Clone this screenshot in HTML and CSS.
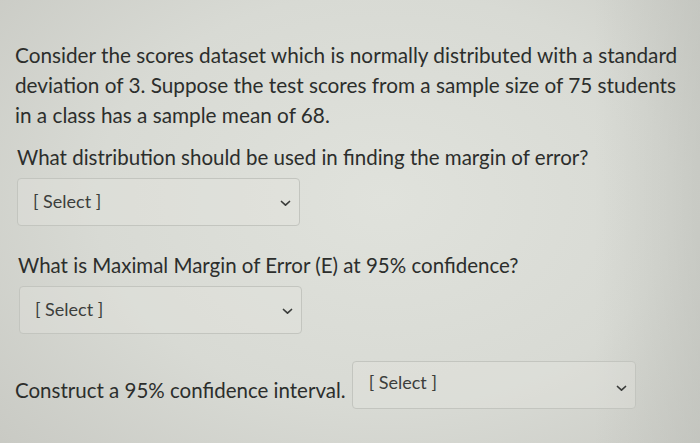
FILE: index.html
```html
<!DOCTYPE html>
<html>
<head>
<meta charset="utf-8">
<link rel="stylesheet" href="styles.css">
</head>
<body>
<div class="page">
  <p class="intro">Consider the scores dataset which is normally distributed with a standard deviation of 3. Suppose the test scores from a sample size of 75 students in a class has a sample mean of 68.</p>

  <div class="question q1">
    <div class="qtext">What distribution should be used in finding the margin of error?</div>
    <div class="select">
      <span class="placeholder">[ Select ]</span>
      <svg class="chev" width="11" height="7" viewBox="0 0 11 7"><path d="M1.5 1.5 L5.5 5.2 L9.5 1.5" fill="none" stroke="#3a3c3a" stroke-width="1.7" stroke-linecap="round" stroke-linejoin="round"/></svg>
    </div>
  </div>

  <div class="question q2">
    <div class="qtext">What is Maximal Margin of Error (E) at 95% confidence?</div>
    <div class="select">
      <span class="placeholder">[ Select ]</span>
      <svg class="chev" width="11" height="7" viewBox="0 0 11 7"><path d="M1.5 1.5 L5.5 5.2 L9.5 1.5" fill="none" stroke="#3a3c3a" stroke-width="1.7" stroke-linecap="round" stroke-linejoin="round"/></svg>
    </div>
  </div>

  <div class="inline-q">
    <span class="qtext">Construct a 95% confidence interval.</span>
    <div class="select wide">
      <span class="placeholder">[ Select ]</span>
      <svg class="chev" width="11" height="7" viewBox="0 0 11 7"><path d="M1.5 1.5 L5.5 5.2 L9.5 1.5" fill="none" stroke="#3a3c3a" stroke-width="1.7" stroke-linecap="round" stroke-linejoin="round"/></svg>
    </div>
  </div>
</div>
</body>
</html>
```

FILE: styles.css
```css
html, body {
  margin: 0;
  padding: 0;
  width: 700px;
  height: 443px;
  overflow: hidden;
}

body {
  font-family: Lato, "Open Sans", sans-serif;
  color: #2c2e2c;
  background:
    linear-gradient(90deg, rgba(190,192,186,0) 0%, rgba(190,192,186,0) 85%, rgba(188,190,184,0.55) 100%),
    radial-gradient(ellipse 75% 85% at 55% 45%, #e0e2dc 0%, #d8dad4 55%, #c8c9c3 100%);
}

.page {
  padding: 40px 0 0 15px;
}

.intro {
  margin: 0;
  width: 675px;
  font-size: 20.75px;
  line-height: 30px;
}

.question {
  margin-top: 15px;
}

.qtext {
  font-size: 20.5px;
  line-height: 25px;
}

.q1 .qtext {
  padding-left: 2px;
}

.q2 {
  margin-top: 27px;
}

.q2 .qtext {
  padding-left: 3px;
}

.select {
  box-sizing: border-box;
  width: 283px;
  height: 48px;
  margin-top: 8px;
  border: 1px solid #c3c5bf;
  border-radius: 4px;
  background: rgba(228,230,224,0.35);
  display: flex;
  align-items: center;
  justify-content: space-between;
  padding: 0 8px 0 15px;
}

.q1 .select {
  margin-left: 2px;
}

.q2 .select {
  margin-left: 4px;
}

.placeholder {
  font-size: 18px;
  color: #3c3e3c;
  margin-top: -2px;
}

.chev {
  margin-top: 2px;
}

.inline-q {
  display: flex;
  align-items: flex-start;
  margin-top: 27px;
}

.inline-q .qtext {
  margin-top: 17px;
  margin-right: 6px;
}

.select.wide {
  width: 284px;
  margin-top: 0;
  padding-left: 16px;
  align-items: flex-start;
  padding-top: 11px;
}

.select.wide .chev {
  margin-top: 12px;
}
```
